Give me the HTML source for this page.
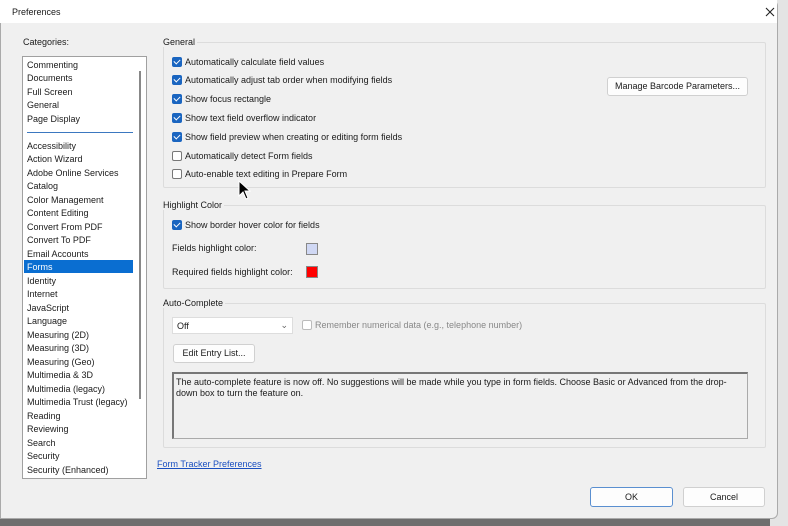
<!DOCTYPE html>
<html><head><style>
*{margin:0;padding:0;box-sizing:border-box}
body{width:788px;height:526px;background:#6e6e6e;font-family:"Liberation Sans",sans-serif;font-size:9px;color:#1a1a1a;position:relative;overflow:hidden}
.a{position:absolute}
#bg{left:770px;top:0;width:18px;height:526px;background:#e4e4e4}
#dlg{left:0;top:0;width:778px;height:519px;background:#f0f0f0;border:1px solid #aaa;border-radius:0 6px 6px 0}
#tb{left:0;top:0;width:777px;height:23px;background:#fff}
.grp{position:absolute;border:1px solid #dcdcdc;border-radius:2px}
.gt{position:absolute;background:#f0f0f0;padding:0 2px}
.cb{position:absolute;width:10px;height:10px;border-radius:2px;background:#1a65c0}
.cb::after{content:"";position:absolute;left:3px;top:1px;width:3px;height:5px;border:solid #fff;border-width:0 1.3px 1.3px 0;transform:rotate(45deg)}
.cu{position:absolute;width:10px;height:10px;border-radius:2px;border:1px solid #777;background:#fff}
.btn{position:absolute;background:#fdfdfd;border:1px solid #d0d0d0;border-radius:3px;text-align:center}
#list{left:22px;top:56px;width:125px;height:423px;background:#fff;border:1px solid #a0a0a0}
#list div{position:absolute;left:4px}
</style></head><body>
<div class="a" id="bg"></div>
<div class="a" id="dlg"></div>
<div class="a" id="tb"></div>
<div class="a" style="left:12px;top:7px">Preferences</div>
<svg class="a" style="left:765px;top:7px" width="10" height="10"><path d="M1 1L9 9M9 1L1 9" stroke="#222" stroke-width="1.1"/></svg>
<div class="a" style="left:23px;top:37px">Categories:</div>
<div class="a" id="list">
<div style="top:3px">Commenting</div><div style="top:16px">Documents</div><div style="top:30px">Full Screen</div><div style="top:43px">General</div><div style="top:57px">Page Display</div>
<div style="top:75px;width:106px;height:1px;background:#3b78c0"></div>
<div style="top:84px">Accessibility</div><div style="top:97px">Action Wizard</div><div style="top:111px">Adobe Online Services</div><div style="top:124px">Catalog</div><div style="top:138px">Color Management</div><div style="top:151px">Content Editing</div><div style="top:165px">Convert From PDF</div><div style="top:178px">Convert To PDF</div><div style="top:192px">Email Accounts</div>
<div style="top:203px;left:1px;width:109px;height:13px;background:#0a6ed1"></div>
<div style="top:205px;color:#fff">Forms</div>
<div style="top:219px">Identity</div><div style="top:232px">Internet</div><div style="top:246px">JavaScript</div><div style="top:259px">Language</div><div style="top:273px">Measuring (2D)</div><div style="top:286px">Measuring (3D)</div><div style="top:300px">Measuring (Geo)</div><div style="top:313px">Multimedia &amp; 3D</div><div style="top:327px">Multimedia (legacy)</div><div style="top:340px">Multimedia Trust (legacy)</div><div style="top:354px">Reading</div><div style="top:367px">Reviewing</div><div style="top:381px">Search</div><div style="top:394px">Security</div><div style="top:408px">Security (Enhanced)</div>
<div style="left:116px;top:14px;width:2px;height:328px;background:#888"></div>
</div>

<div class="grp" style="left:163px;top:42px;width:603px;height:146px"></div>
<div class="gt" style="left:161px;top:37px">General</div>
<div class="cb" style="left:172px;top:57px"></div><div class="a" style="left:185px;top:57px">Automatically calculate field values</div>
<div class="cb" style="left:172px;top:75px"></div><div class="a" style="left:185px;top:75px">Automatically adjust tab order when modifying fields</div>
<div class="cb" style="left:172px;top:94px"></div><div class="a" style="left:185px;top:94px">Show focus rectangle</div>
<div class="cb" style="left:172px;top:113px"></div><div class="a" style="left:185px;top:113px">Show text field overflow indicator</div>
<div class="cb" style="left:172px;top:132px"></div><div class="a" style="left:185px;top:132px">Show field preview when creating or editing form fields</div>
<div class="cu" style="left:172px;top:151px"></div><div class="a" style="left:185px;top:151px">Automatically detect Form fields</div>
<div class="cu" style="left:172px;top:169px"></div><div class="a" style="left:185px;top:169px">Auto-enable text editing in Prepare Form</div>
<div class="btn" style="left:607px;top:77px;width:141px;height:19px;line-height:17px">Manage Barcode Parameters...</div>
<svg class="a" style="left:238px;top:180px" width="14" height="22"><path d="M1 1 L1 16 L5 12 L8 19 L10 18 L7 11 L12 11 Z" fill="#000" stroke="#fff" stroke-width="1"/></svg>

<div class="grp" style="left:163px;top:205px;width:603px;height:84px"></div>
<div class="gt" style="left:161px;top:200px">Highlight Color</div>
<div class="cb" style="left:172px;top:220px"></div><div class="a" style="left:185px;top:220px">Show border hover color for fields</div>
<div class="a" style="left:172px;top:243px">Fields highlight color:</div>
<div class="a" style="left:306px;top:243px;width:12px;height:12px;border:1px solid #888;background:#d0d8f4"></div>
<div class="a" style="left:172px;top:267px">Required fields highlight color:</div>
<div class="a" style="left:306px;top:266px;width:12px;height:12px;border:1px solid #888;background:#f00"></div>

<div class="grp" style="left:163px;top:303px;width:603px;height:145px"></div>
<div class="gt" style="left:161px;top:298px">Auto-Complete</div>
<div class="a" style="left:172px;top:317px;width:121px;height:17px;background:#fff;border:1px solid #ddd;padding:3px 4px">Off<span style="position:absolute;right:4px;top:2px;color:#666">⌄</span></div>
<div class="cu" style="left:302px;top:320px;border-color:#bbb"></div><div class="a" style="left:315px;top:320px;color:#888">Remember numerical data (e.g., telephone number)</div>
<div class="btn" style="left:173px;top:344px;width:82px;height:19px;line-height:17px">Edit Entry List...</div>
<div class="a" style="left:172px;top:372px;width:576px;height:67px;border:1px solid #aaa;border-top:2px solid #777;border-left:2px solid #777;padding:3px 2px;line-height:11px">The auto-complete feature is now off. No suggestions will be made while you type in form fields. Choose Basic or Advanced from the drop-down box to turn the feature on.</div>

<div class="a" style="left:157px;top:459px;color:#1a4fc0;text-decoration:underline">Form Tracker Preferences</div>
<div class="btn" style="left:590px;top:487px;width:83px;height:20px;line-height:18px;border-color:#5a8fd0">OK</div>
<div class="btn" style="left:683px;top:487px;width:82px;height:20px;line-height:18px">Cancel</div>
</body></html>
